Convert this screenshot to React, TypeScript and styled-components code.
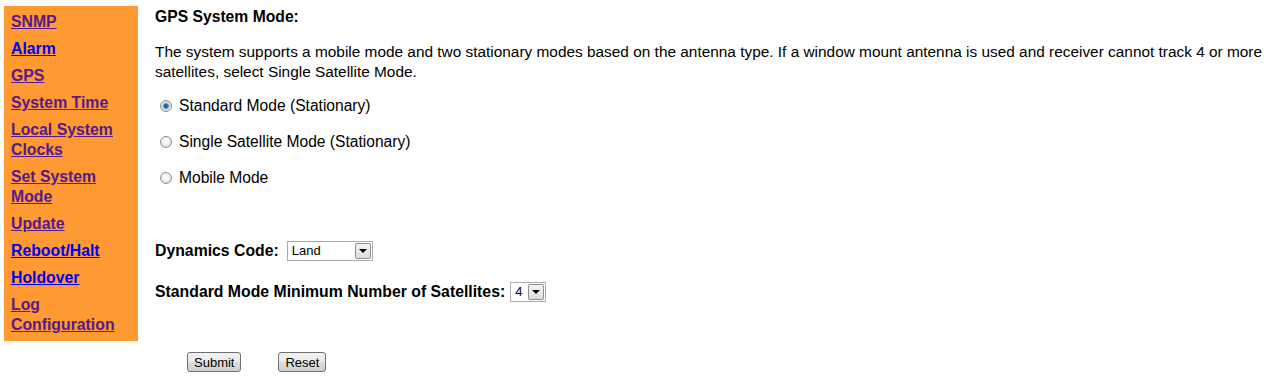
import styled, { createGlobalStyle } from "styled-components";

const GlobalStyle = createGlobalStyle`
  html, body {
    margin: 0;
    padding: 0;
    background: #ffffff;
  }
  body {
    font-family: "Liberation Sans", Arial, sans-serif;
    color: #000000;
  }
`;

const Page = styled.div`
  display: flex;
  align-items: flex-start;
  gap: 17px;
  padding: 6px 0 0 4px;
`;

const Sidebar = styled.nav`
  width: 134px;
  flex: none;
  box-sizing: border-box;
  padding: 6px 2px 6px 7px;
  background: #ff9933;
  display: flex;
  flex-direction: column;
  gap: 7px;
`;

const NavLink = styled.a<{ $visited?: boolean }>`
  font-size: 15.8px;
  font-weight: bold;
  line-height: 20px;
  color: ${({ $visited }) => ($visited ? "#551a8b" : "#0000ee")};
  text-decoration: underline;
  cursor: pointer;
`;

const Main = styled.main`
  flex: 1;
  padding-top: 2px;
  display: flex;
  flex-direction: column;
  align-items: flex-start;
`;

const Heading = styled.h3`
  margin: 0;
  font-size: 15.7px;
  font-weight: bold;
  line-height: 18px;
`;

const Description = styled.p`
  margin: 16px 0 0;
  font-size: 15.4px;
  line-height: 20px;
`;

const RadioGroup = styled.div`
  margin-top: 14px;
  display: flex;
  flex-direction: column;
  gap: 16px;
`;

const RadioRow = styled.label`
  display: flex;
  align-items: center;
  gap: 7px;
  height: 20px;
  padding-left: 5px;
  font-size: 15.6px;
`;

const Radio = styled.input.attrs({ type: "radio" })`
  appearance: none;
  margin: 0;
  width: 12px;
  height: 12px;
  border-radius: 50%;
  border: 1px solid #8e8f8f;
  box-sizing: border-box;
  background: radial-gradient(circle at 50% 40%, #ffffff 0%, #f0f0f0 45%, #cfcfcf 100%);

  &:checked {
    background: radial-gradient(circle, #0f4f86 0%, #2a78b8 30%, #9fc0da 42%, #e4e4e4 56%, #c8c8c8 100%);
  }
`;

const FieldRow = styled.div<{ $top: number }>`
  margin-top: ${({ $top }) => $top}px;
  display: flex;
  align-items: center;
  height: 21px;
`;

const FieldLabel = styled.span<{ $gap: number }>`
  font-size: 15.8px;
  font-weight: bold;
  margin-right: ${({ $gap }) => $gap}px;
`;

const SelectBox = styled.div<{ $width: number }>`
  width: ${({ $width }) => $width}px;
  height: 20px;
  box-sizing: border-box;
  border: 1px solid #a5acb2;
  background: #ffffff;
  display: flex;
  align-items: stretch;
`;

const SelectValue = styled.span`
  flex: 1;
  padding-left: 4px;
  font-size: 13px;
  line-height: 18px;
`;

const ArrowButton = styled.span`
  width: 16px;
  margin: 1px;
  box-sizing: border-box;
  border: 1px solid #8f8f8f;
  border-radius: 2px;
  background: linear-gradient(#f4f4f4, #dcdcdc);
  display: flex;
  align-items: center;
  justify-content: center;

  &::after {
    content: "";
    border-left: 4px solid transparent;
    border-right: 4px solid transparent;
    border-top: 4px solid #000000;
  }
`;

const ButtonRow = styled.div`
  margin-top: 50px;
  margin-left: 32px;
  display: flex;
  gap: 37px;
`;

const Button = styled.button`
  height: 20px;
  box-sizing: border-box;
  padding: 0 6px;
  border: 1px solid #707070;
  border-radius: 3px;
  background: linear-gradient(#f2f2f2 0%, #ebebeb 50%, #dddddd 51%, #cfcfcf 100%);
  font-family: "Liberation Sans", Arial, sans-serif;
  font-size: 13px;
  color: #000000;
`;

const navItems = [
  { label: "SNMP", visited: true },
  { label: "Alarm", visited: false },
  { label: "GPS", visited: true },
  { label: "System Time", visited: true },
  { label: "Local System Clocks", visited: true },
  { label: "Set System Mode", visited: true },
  { label: "Update", visited: true },
  { label: "Reboot/Halt", visited: false },
  { label: "Holdover", visited: false },
  { label: "Log Configuration", visited: true },
];

const modes = [
  "Standard Mode (Stationary)",
  "Single Satellite Mode (Stationary)",
  "Mobile Mode",
];

export default function App() {
  return (
    <>
      <GlobalStyle />
      <Page>
        <Sidebar>
          {navItems.map((item) => (
            <NavLink key={item.label} $visited={item.visited}>
              {item.label}
            </NavLink>
          ))}
        </Sidebar>

        <Main>
          <Heading>GPS System Mode:</Heading>
          <Description>
            The system supports a mobile mode and two stationary modes based on the antenna type. If a window
            mount antenna is used and receiver cannot track 4 or more satellites, select Single Satellite Mode.
          </Description>

          <RadioGroup>
            {modes.map((mode, i) => (
              <RadioRow key={mode}>
                <Radio name="mode" defaultChecked={i === 0} />
                {mode}
              </RadioRow>
            ))}
          </RadioGroup>

          <FieldRow $top={52}>
            <FieldLabel $gap={8}>Dynamics Code:</FieldLabel>
            <SelectBox $width={86}>
              <SelectValue>Land</SelectValue>
              <ArrowButton />
            </SelectBox>
          </FieldRow>

          <FieldRow $top={20}>
            <FieldLabel $gap={5}>Standard Mode Minimum Number of Satellites:</FieldLabel>
            <SelectBox $width={36}>
              <SelectValue>4</SelectValue>
              <ArrowButton />
            </SelectBox>
          </FieldRow>

          <ButtonRow>
            <Button>Submit</Button>
            <Button>Reset</Button>
          </ButtonRow>
        </Main>
      </Page>
    </>
  );
}
